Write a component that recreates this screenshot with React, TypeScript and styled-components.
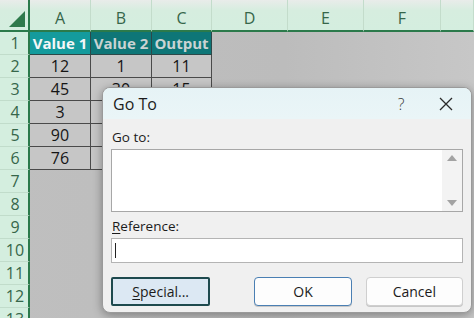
import React from "react";
import styled, { createGlobalStyle } from "styled-components";

const GlobalStyle = createGlobalStyle`
  html, body {
    margin: 0;
    padding: 0;
    background: #c2c2c2;
  }
  * {
    box-sizing: border-box;
  }
`;

const columns = [
  { label: "A", width: 61 },
  { label: "B", width: 61 },
  { label: "C", width: 60 },
  { label: "D", width: 76 },
  { label: "E", width: 76 },
  { label: "F", width: 77 },
  { label: "", width: 33 },
];

const data = [
  ["12", "1", "11"],
  ["45", "30", "15"],
  ["3", "", ""],
  ["90", "", ""],
  ["76", "", ""],
];

const Screen = styled.div`
  position: relative;
  width: 474px;
  height: 318px;
  overflow: hidden;
  font-family: "Open Sans", "Noto Sans", sans-serif;
`;

const Sheet = styled.div`
  display: grid;
  grid-template-columns: 30px ${columns.map((c) => `${c.width}px`).join(" ")};
  grid-template-rows: 32px repeat(13, 23px);
  background: linear-gradient(90deg, #bfbfbf 0%, #bcbcbc 60%, #c7c7c7 100%);
`;

const Corner = styled.div`
  position: relative;
  background: linear-gradient(180deg, #e9ecea 0%, #d6eddf 35%, #d4eedf 100%);
  border-right: 2px solid #2b7a4b;
  border-bottom: 2px solid #2b7a4b;
  &::after {
    content: "";
    position: absolute;
    right: 3px;
    bottom: 3px;
    width: 0;
    height: 0;
    border-left: 16px solid transparent;
    border-bottom: 16px solid #2f7a4c;
  }
`;

const ColHead = styled.div`
  display: flex;
  align-items: flex-end;
  justify-content: center;
  padding-bottom: 1px;
  background: linear-gradient(180deg, #e9ecea 0%, #d6eddf 35%, #d4eedf 100%);
  border-right: 1px solid #c3dccb;
  border-bottom: 2px solid #2b7a4b;
  color: #36664a;
  font-size: 16px;
`;

const RowHead = styled.div`
  display: flex;
  align-items: center;
  justify-content: center;
  background: #d4eedf;
  border-right: 2px solid #2b7a4b;
  border-bottom: 1px solid #c1dccb;
  color: #36664a;
  font-size: 16px;
  padding-left: 2px;
`;

const HeaderCell = styled.div<{ $active?: boolean }>`
  display: flex;
  align-items: center;
  justify-content: center;
  background: ${(p) => (p.$active ? "#149b9d" : "#0e7677")};
  color: ${(p) => (p.$active ? "#f4f7f7" : "#c9d3d3")};
  font-weight: 700;
  font-size: 15px;
  border-right: 1px solid #2d4848;
  border-bottom: 1px solid #2d4848;
  white-space: nowrap;
`;

const DataCell = styled.div`
  display: flex;
  align-items: center;
  justify-content: center;
  background: #c6c6c6;
  color: #151515;
  font-size: 16px;
  border-right: 1px solid #4a4a4a;
  border-bottom: 1px solid #4a4a4a;
`;

const Blank = styled.div``;

const Dialog = styled.div`
  position: absolute;
  left: 102px;
  top: 87px;
  width: 370px;
  height: 226px;
  background: #f0f0f0;
  border: 1px solid #9a9a9a;
  border-radius: 8px;
  box-shadow: 0 2px 10px rgba(0, 0, 0, 0.35);
  overflow: hidden;
  display: flex;
  flex-direction: column;
  color: #1b1b1b;
  font-family: "Open Sans", "Noto Sans", sans-serif;
`;

const TitleBar = styled.div`
  display: flex;
  align-items: center;
  height: 32px;
  padding: 0 0 0 10px;
  background: linear-gradient(180deg, #e6f3f6 0%, #eaf5f7 100%);
  font-size: 16px;
`;

const Title = styled.span`
  flex: 1;
`;

const TitleButton = styled.span<{ $w: number }>`
  display: flex;
  align-items: center;
  justify-content: center;
  width: ${(p) => p.$w}px;
  height: 100%;
  color: #3a3a3a;
  font-size: 16px;
  font-weight: 300;
`;

const Body = styled.div`
  display: flex;
  flex-direction: column;
  padding: 10px 8px 6px 8px;
`;

const Label = styled.div<{ $gap: number }>`
  font-size: 13.5px;
  line-height: 17px;
  margin-top: ${(p) => p.$gap}px;
  margin-bottom: 3px;
  padding-left: 1px;
`;

const ListBox = styled.div`
  display: flex;
  height: 63px;
  background: #ffffff;
  border: 1px solid #a7a7a7;
`;

const ListArea = styled.div`
  flex: 1;
`;

const ScrollBar = styled.div`
  display: flex;
  flex-direction: column;
  justify-content: space-between;
  align-items: center;
  width: 20px;
  background: #f3f3f3;
  padding: 5px 0;
`;

const Arrow = styled.div<{ $down?: boolean }>`
  width: 0;
  height: 0;
  border-left: 5px solid transparent;
  border-right: 5px solid transparent;
  ${(p) =>
    p.$down
      ? "border-top: 6px solid #a3a3a3;"
      : "border-bottom: 6px solid #a3a3a3;"}
`;

const RefInput = styled.div`
  display: flex;
  align-items: center;
  height: 25px;
  background: #ffffff;
  border: 1px solid #b4b4b4;
  padding-left: 3px;
`;

const Caret = styled.div`
  width: 1px;
  height: 15px;
  background: #222;
`;

const Buttons = styled.div`
  display: flex;
  align-items: center;
  margin-top: 14px;
`;

const Button = styled.div<{ $kind: "special" | "ok" | "cancel"; $w: number; $ml: number }>`
  display: flex;
  align-items: center;
  justify-content: center;
  width: ${(p) => p.$w}px;
  height: 29px;
  margin-left: ${(p) => p.$ml}px;
  font-size: 14px;
  color: #1b1b1b;
  border-radius: ${(p) => (p.$kind === "special" ? "2px" : "4px")};
  background: ${(p) => (p.$kind === "special" ? "#dce8f3" : "#fdfdfd")};
  border: ${(p) =>
    p.$kind === "special"
      ? "2px solid #1e4a4e"
      : p.$kind === "ok"
      ? "1px solid #4a7fb3"
      : "1px solid #cfcfcf"};
  box-shadow: ${(p) => (p.$kind === "special" ? "none" : "0 1px 0 #c8c8c8")};
`;

const U = styled.span`
  text-decoration: underline;
  text-underline-offset: 2px;
`;

export default function App() {
  const cells: React.ReactNode[] = [];
  cells.push(<Corner key="corner" />);
  columns.forEach((c, i) => cells.push(<ColHead key={`h${i}`}>{c.label}</ColHead>));

  for (let r = 1; r <= 13; r++) {
    cells.push(<RowHead key={`r${r}`}>{r}</RowHead>);
    for (let c = 0; c < columns.length; c++) {
      const key = `c${r}-${c}`;
      if (r === 1 && c < 3) {
        cells.push(
          <HeaderCell key={key} $active={c === 0}>
            {["Value 1", "Value 2", "Output"][c]}
          </HeaderCell>
        );
      } else if (r >= 2 && r <= 6 && c < 3) {
        cells.push(<DataCell key={key}>{data[r - 2][c]}</DataCell>);
      } else {
        cells.push(<Blank key={key} />);
      }
    }
  }

  return (
    <>
      <GlobalStyle />
      <Screen>
        <Sheet>{cells}</Sheet>
        <Dialog>
          <TitleBar>
            <Title>Go To</Title>
            <TitleButton $w={40}>?</TitleButton>
            <TitleButton $w={50}>
              <svg width="16" height="16" viewBox="0 0 16 16">
                <path d="M2 2 L14 14 M14 2 L2 14" stroke="#2a2a2a" strokeWidth="1.3" fill="none" />
              </svg>
            </TitleButton>
          </TitleBar>
          <Body>
            <Label $gap={0}>Go to:</Label>
            <ListBox>
              <ListArea />
              <ScrollBar>
                <Arrow />
                <Arrow $down />
              </ScrollBar>
            </ListBox>
            <Label $gap={6}>
              <U>R</U>eference:
            </Label>
            <RefInput>
              <Caret />
            </RefInput>
            <Buttons>
              <Button $kind="special" $w={100} $ml={0}>
                <span>
                  <U>S</U>pecial...
                </span>
              </Button>
              <Button $kind="ok" $w={98} $ml={44}>
                OK
              </Button>
              <Button $kind="cancel" $w={98} $ml={14}>
                Cancel
              </Button>
            </Buttons>
          </Body>
        </Dialog>
      </Screen>
    </>
  );
}
